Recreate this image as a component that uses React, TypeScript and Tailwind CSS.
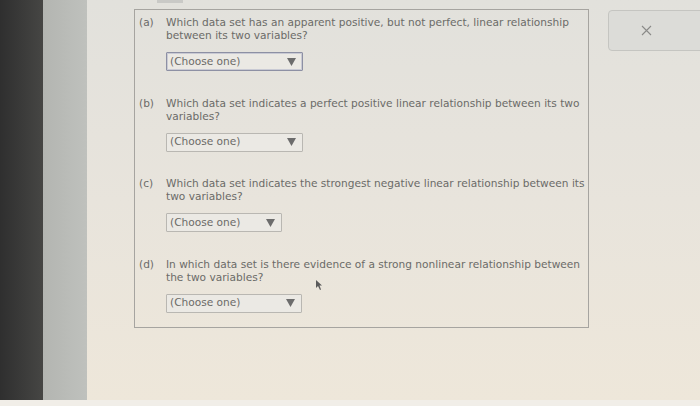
import React from "react";

interface Question {
  label: string;
  lines: [string, string];
  selectWidth: string;
  focused?: boolean;
}

const questions: Question[] = [
  {
    label: "(a)",
    lines: ["Which data set has an apparent positive, but not perfect, linear relationship", "between its two variables?"],
    selectWidth: "w-[137px]",
    focused: true,
  },
  {
    label: "(b)",
    lines: ["Which data set indicates a perfect positive linear relationship between its two", "variables?"],
    selectWidth: "w-[137px]",
  },
  {
    label: "(c)",
    lines: ["Which data set indicates the strongest negative linear relationship between its", "two variables?"],
    selectWidth: "w-[116px]",
  },
  {
    label: "(d)",
    lines: ["In which data set is there evidence of a strong nonlinear relationship between", "the two variables?"],
    selectWidth: "w-[136px]",
  },
];

const ChooseOne: React.FC<{ width: string; focused?: boolean }> = ({ width, focused }) => (
  <div
    className={`${width} h-[19px] flex items-center justify-between pl-[3px] pr-[6px] rounded-[1px] bg-[#ebe9e4] ${
      focused ? "border border-[#8d90a4] shadow-[inset_0_0_0_1px_#c9cad4]" : "border border-[#b9b7b2]"
    }`}
  >
    <span>(Choose one)</span>
    <svg width="9" height="8" viewBox="0 0 9 8">
      <polygon points="0,0 9,0 4.5,8" fill="#6c6c6c" />
    </svg>
  </div>
);

const App: React.FC = () => {
  return (
    <div className="w-[700px] h-[406px] overflow-hidden flex flex-col font-['DejaVu_Sans',sans-serif] text-[10.6px] text-[#6b6b68]">
      <div className="flex h-[400px]">
        <div className="w-[43px] shrink-0 bg-gradient-to-r from-[#2f2f2f] to-[#464644]" />
        <div className="w-[44px] shrink-0 bg-gradient-to-r from-[#b3b5b1] to-[#bfc1bd]" />
        <div className="relative flex-1 min-w-0 flex items-start bg-gradient-to-b from-[#e2e1dc] via-[#e8e4dc] to-[#eee7da]">
          <div className="absolute left-[70px] top-0 w-[26px] h-[3px] bg-[#c9c9c6]" />
          <div className="shrink-0 ml-[47px] mt-[9px] w-[455px] h-[319px] border border-[#a6a4a0] pt-[6px] pl-[4px]">
            {questions.map((q) => (
              <div key={q.label} className="flex h-[80.5px]">
                <div className="w-[27px] shrink-0 leading-[13px]">{q.label}</div>
                <div className="flex flex-col">
                  <div className="leading-[13px] whitespace-nowrap">{q.lines[0]}</div>
                  <div className="leading-[13px]">{q.lines[1]}</div>
                  <div className="mt-[10px]">
                    <ChooseOne width={q.selectWidth} focused={q.focused} />
                  </div>
                </div>
              </div>
            ))}
          </div>
          <div className="shrink-0 ml-[19px] mt-[10px] w-[100px] h-[41px] rounded-[4px] border border-[#c5c5c1] bg-[#dcdcd8] flex items-center pl-[32px]">
            <svg width="11" height="11" viewBox="0 0 11 11">
              <path d="M1 1 L10 10 M10 1 L1 10" stroke="#8a8a88" strokeWidth="1.1" />
            </svg>
          </div>
          {/* mouse pointer */}
          <svg className="absolute left-[228px] top-[279px]" width="8" height="12" viewBox="0 0 8 12">
            <path d="M1 1 L1 9 L3 7 L5 11 L6 10.5 L4.5 6.5 L7 6.5 Z" fill="#5a5a5a" />
          </svg>
        </div>
      </div>
      <div className="h-[6px] bg-[#f1eee8]" />
    </div>
  );
};

export default App;
